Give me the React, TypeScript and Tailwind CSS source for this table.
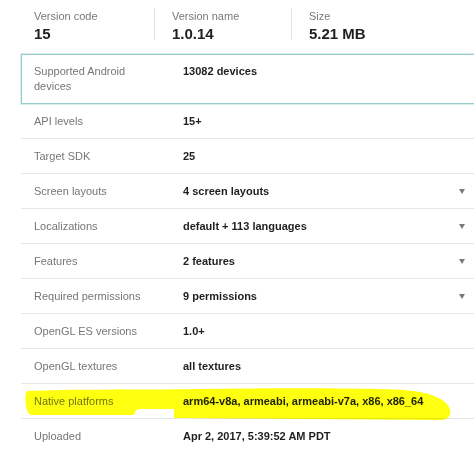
const stats = [
  { label: "Version code", value: "15" },
  { label: "Version name", value: "1.0.14" },
  { label: "Size", value: "5.21 MB" },
];

const rows: { label: string; value: string; expand?: boolean }[] = [
  { label: "API levels", value: "15+" },
  { label: "Target SDK", value: "25" },
  { label: "Screen layouts", value: "4 screen layouts", expand: true },
  { label: "Localizations", value: "default + 113 languages", expand: true },
  { label: "Features", value: "2 features", expand: true },
  { label: "Required permissions", value: "9 permissions", expand: true },
  { label: "OpenGL ES versions", value: "1.0+" },
  { label: "OpenGL textures", value: "all textures" },
  { label: "Native platforms", value: "arm64-v8a, armeabi, armeabi-v7a, x86, x86_64" },
  { label: "Uploaded", value: "Apr 2, 2017, 5:39:52 AM PDT" },
];

function Caret() {
  return (
    <svg width="6" height="5" viewBox="0 0 6 5" className="shrink-0">
      <polygon points="0,0 6,0 3,5" fill="#7a7a7a" />
    </svg>
  );
}

export default function App() {
  return (
    <div
      className="relative w-[474px] h-[451px] overflow-hidden bg-white text-[11px] leading-[15px]"
      style={{ fontFamily: '"Liberation Sans", Arial, sans-serif' }}
    >
      {/* Summary stats */}
      <div className="flex pt-[8px] pl-[17px]">
        {stats.map((s, i) => (
          <div
            key={s.label}
            className={`w-[137px] h-[32px] pl-[17px] ${i > 0 ? "border-l border-[#e3e3e3]" : ""}`}
          >
            <div className="text-[#787878] pt-[1px]">{s.label}</div>
            <div className="text-[15px] leading-[18px] font-bold text-[#1f1f1f] pt-[1px]">{s.value}</div>
          </div>
        ))}
      </div>

      {/* Details list */}
      <div className="ml-[21px] mt-[14px] w-[459px]">
        <div className="flex border border-[#98cccc] shadow-[0_0_0_1px_#d8eeee] pt-[9px] pb-[9px]">
          <div className="w-[161px] pl-[12px] text-[#767676]">
            Supported Android
            <br />
            devices
          </div>
          <div className="flex-1 font-bold text-[#1f1f1f]">13082 devices</div>
        </div>
        {rows.map((r) => (
          <div key={r.label} className="flex items-center pt-[10px] pb-[9px] border-b border-[#e6e6e6]">
            <div className="w-[162px] pl-[13px] text-[#767676]">{r.label}</div>
            <div className="flex-1 font-bold text-[#1f1f1f] whitespace-nowrap">{r.value}</div>
            <div className="w-[6px] mr-[15px]">{r.expand && <Caret />}</div>
          </div>
        ))}
      </div>

      {/* Highlighter stroke */}
      <svg
        className="absolute left-0 top-0 pointer-events-none mix-blend-multiply"
        width="474"
        height="451"
        viewBox="0 0 474 451"
      >
        <path
          d="M27,391 C70,389 130,390 200,389 C280,388 360,388 404,390 C432,392 447,400 450,409 C452,417 446,421 436,420 L174,418 L174,409 L141,409 L136,410 L134,415 L31,415 C25,413 24,394 27,391 Z"
          fill="#ffff10"
        />
      </svg>
    </div>
  );
}
